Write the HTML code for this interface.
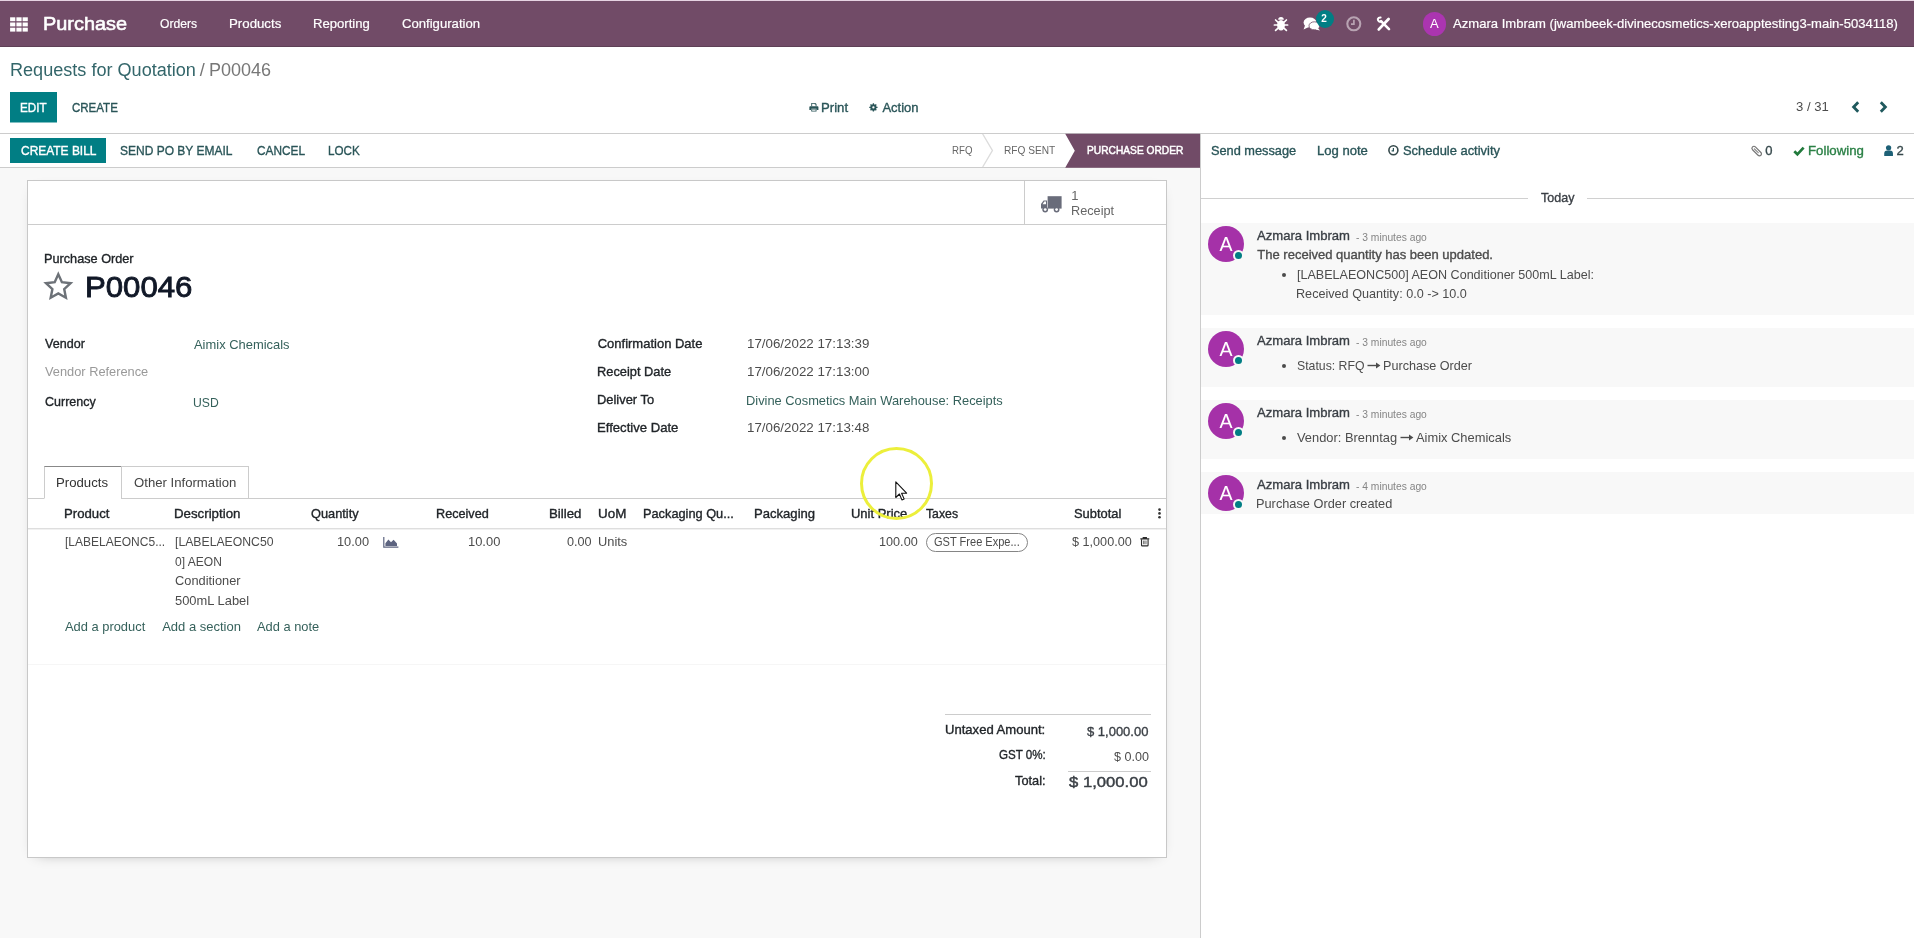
<!DOCTYPE html>
<html><head><meta charset="utf-8">
<title>P00046 - Odoo</title>
<style>
*{box-sizing:border-box;margin:0;padding:0}
html,body{width:1914px;height:938px;overflow:hidden}
body{font-family:"Liberation Sans",sans-serif;font-size:13px;color:#4c4c4c;background:#f8f8f8;position:relative}
.abs{position:absolute;white-space:nowrap}
.box{position:absolute}
svg{position:absolute;overflow:visible}
#nav{left:0;top:0;width:1914px;height:47px;background:#714B67;border-top:1px solid #e6d3e2;border-bottom:1px solid #5e4056}
#cp{left:0;top:47px;width:1914px;height:87px;background:#fff;border-bottom:1px solid #ccc}
#sb{left:0;top:134px;width:1200px;height:34px;background:#fff;border-bottom:1px solid #ccc}
#sheet{left:27px;top:180px;width:1140px;height:678px;background:#fff;border:1px solid #c8c8c8;box-shadow:0 4px 14px -10px rgba(0,0,0,.45)}
#chat{left:1200px;top:134px;width:714px;height:804px;background:#fff;border-left:1px solid #ccc}
.msg{left:1201px;width:713px;background:#f8f8f8}
.av{width:36px;height:36px;border-radius:50%;background:#a531a8}
.dot{width:11px;height:11px;border-radius:50%;background:#017e84;border:2px solid #f8f8f8}
.bul{width:4px;height:4px;border-radius:50%;background:#4c4c4c}
</style></head><body>
<div id="root" style="position:absolute;left:0;top:0;width:1914px;height:938px;will-change:transform">
<div class="box" id="nav"></div>
<div class="box" id="cp"></div>
<div class="box" id="sb"></div>
<div class="box" id="sheet"></div>
<div class="box" id="chat"></div>
<!-- nav icons -->
<svg style="left:9.5px;top:16.5px" width="18" height="15" viewBox="0 0 18 15"><g fill="#fff"><rect x="0.1" y="0.3" width="5.2" height="3.9"/><rect x="6.4" y="0.3" width="5.2" height="3.9"/><rect x="12.6" y="0.3" width="5.2" height="3.9"/><rect x="0.1" y="5.5" width="5.2" height="3.9"/><rect x="6.4" y="5.5" width="5.2" height="3.9"/><rect x="12.6" y="5.5" width="5.2" height="3.9"/><rect x="0.1" y="10.7" width="5.2" height="3.9"/><rect x="6.4" y="10.7" width="5.2" height="3.9"/><rect x="12.6" y="10.7" width="5.2" height="3.9"/></g></svg>
<!-- bug -->
<svg style="left:1273px;top:15px" width="16" height="17" viewBox="0 0 16 17"><g fill="#fff" stroke="#fff" stroke-linecap="round"><ellipse cx="8" cy="10.2" rx="3.9" ry="5.2" stroke="none"/><path d="M5.2 4.8a2.8 2.8 0 0 1 5.6 0z" stroke="none"/><path d="M1.4 10h13.2M2.6 5l2.8 2.6M13.4 5l-2.8 2.6M2.6 15.4l2.8-2.6M13.4 15.4l-2.8-2.6" stroke-width="1.7" fill="none"/></g></svg>
<!-- comments -->
<svg style="left:1303px;top:16px" width="18" height="16" viewBox="0 0 18 16"><g fill="#fff"><ellipse cx="7" cy="6.6" rx="6.4" ry="5"/><path d="M2.2 9l-1.6 4.4 4.6-2.1z"/><ellipse cx="11.4" cy="9.8" rx="5.4" ry="4" stroke="#714B67" stroke-width="0.8"/><path d="M14.6 11.8l2.4 2.7-4.6-.9z"/></g></svg>
<div class="box" style="left:1315.7px;top:10.2px;width:18px;height:18px;border-radius:50%;background:#017e84"></div>
<!-- clock (dim) -->
<svg style="left:1346px;top:15.5px" width="16" height="16" viewBox="0 0 16 16"><circle cx="7.8" cy="7.8" r="6.5" fill="none" stroke="#b8a3b2" stroke-width="2.1"/><path d="M7.9 3.8v4.4H5" fill="none" stroke="#b8a3b2" stroke-width="1.7"/></svg>
<!-- tools -->
<svg style="left:1376px;top:16px" width="16" height="16" viewBox="0 0 16 16"><g stroke="#fff" stroke-linecap="round" fill="none"><path d="M2.8 13.4L12.6 3" stroke-width="2.8"/><path d="M5 5.2L13 13.2" stroke-width="2.6"/><path d="M1.8 3a2.7 2.7 0 0 0 3.8 2.6M4.6 1.4a2.7 2.7 0 0 0-2.8 1.8" stroke-width="2"/></g></svg>
<!-- avatar -->
<div class="box" style="left:1422.7px;top:12.4px;width:23.6px;height:23.6px;border-radius:50%;background:#ab35b0"></div>

<!-- control panel -->
<div class="box" style="left:10px;top:92px;width:47px;height:30px;background:#017e84"></div><div class="box" style="left:10px;top:122px;width:47px;height:1px;background:#80bfc2"></div>
<!-- print -->
<svg style="left:808.8px;top:102.2px" width="9.6" height="10.5" viewBox="0 0 11 12"><g fill="#2a5558"><path d="M2.6 1h4.6l1.4 1.4v2.4h-1V2.9H6.6V2H3.6v2.8h-1z"/><path d="M1.4 4.8h8.4a1 1 0 0 1 1 1v3.4H8.6v-1.6H2.6v1.6H.4V5.8a1 1 0 0 1 1-1z"/><path d="M2.6 8.2h6v2.6h-6zM3.6 9v1h4V9z" fill-rule="evenodd"/></g></svg>
<!-- cog -->
<svg style="left:869.2px;top:102.8px" width="8.8" height="8.8" viewBox="0 0 10 10"><g fill="none" stroke="#2a5558"><circle cx="5" cy="5" r="2.5" stroke-width="2"/><path d="M5 .3v9.4M.3 5h9.4M1.7 1.7l6.6 6.6M8.3 1.7L1.7 8.3" stroke-width="1.5"/></g><circle cx="5" cy="5" r="1.3" fill="#fff"/></svg>
<!-- pager chevrons -->
<svg style="left:1851px;top:101px" width="10" height="12" viewBox="0 0 10 12"><path d="M7.2 1.2L2.6 6l4.6 4.8" fill="none" stroke="#1f595d" stroke-width="2.8"/></svg>
<svg style="left:1878px;top:101px" width="10" height="12" viewBox="0 0 10 12"><path d="M2.8 1.2L7.4 6l-4.6 4.8" fill="none" stroke="#1f595d" stroke-width="2.8"/></svg>

<!-- statusbar -->
<div class="box" style="left:10px;top:138px;width:96px;height:25px;background:#017e84"></div>
<svg style="left:975px;top:134px" width="226" height="33" viewBox="975 134 226 33"><path d="M982.7 134L992.4 150.5L982.7 167" fill="none" stroke="#dcdcdc" stroke-width="1.4"/><path d="M1065.2 133.8H1200V167.7H1065.2L1074.8 150.7z" fill="#714B67"/></svg>

<!-- chatter topbar icons -->
<svg style="left:1388px;top:145px" width="11" height="11" viewBox="0 0 11 11"><circle cx="5.4" cy="5.2" r="4.5" fill="none" stroke="#35494b" stroke-width="1.6"/><path d="M5.4 3v2.8H3.6" fill="none" stroke="#2a5558" stroke-width="1.2"/></svg>
<svg style="left:1751.3px;top:144.6px" width="11" height="12" viewBox="0 0 11 12"><g transform="translate(5.5 5.9) rotate(-45)" fill="none" stroke="#777" stroke-linecap="round"><path d="M-2,-3.6a2,2 0 0 1 4,0V4.2a2,2 0 0 1 -4,0z" stroke-width="1.2"/><path d="M0,-3V2.6" stroke-width="1"/></g></svg>
<svg style="left:1793px;top:145.6px" width="12" height="11" viewBox="0 0 12 11"><path d="M1.3 5.2L4.4 8.3L10.6 1.6" fill="none" stroke="#217a3c" stroke-width="2.7"/></svg>
<svg style="left:1884.3px;top:144.8px" width="9.4" height="11.2" viewBox="0 0 9 11"><g fill="#1d6076"><circle cx="4.4" cy="2.8" r="2.6"/><path d="M0.1 10.8V8.4a3 3 0 0 1 3-3h2.6a3 3 0 0 1 3 3v2.4z"/></g></svg>
<!-- Today separator -->
<div class="box" style="left:1201px;top:197.5px;width:327px;height:1px;background:#d0d0d0"></div>
<div class="box" style="left:1587px;top:197.5px;width:327px;height:1px;background:#d0d0d0"></div>
<!-- messages -->
<div class="box msg" style="top:222.6px;height:92.5px"></div>
<div class="box msg" style="top:327.8px;height:59.5px"></div>
<div class="box msg" style="top:399.6px;height:59.8px"></div>
<div class="box msg" style="top:471.7px;height:42px"></div>
<div class="box av" style="left:1208px;top:226.3px"></div><div class="box dot" style="left:1232.9px;top:250.1px"></div>
<div class="box av" style="left:1208px;top:331px"></div><div class="box dot" style="left:1232.9px;top:354.8px"></div>
<div class="box av" style="left:1208px;top:403px"></div><div class="box dot" style="left:1232.9px;top:426.8px"></div>
<div class="box av" style="left:1208px;top:475px"></div><div class="box dot" style="left:1232.9px;top:498.8px"></div>
<div class="box bul" style="left:1282.4px;top:272.6px"></div>
<div class="box bul" style="left:1282.4px;top:364px"></div>
<div class="box bul" style="left:1282.4px;top:436px"></div>
<!-- long arrows -->
<svg style="left:1367px;top:361px" width="14" height="9" viewBox="0 0 14 9"><path d="M0.5 4.5H10" stroke="#4c4c4c" stroke-width="1.4" fill="none"/><path d="M9 1.6L13.4 4.5L9 7.4z" fill="#4c4c4c"/></svg>
<svg style="left:1399.5px;top:433px" width="14" height="9" viewBox="0 0 14 9"><path d="M0.5 4.5H10" stroke="#4c4c4c" stroke-width="1.4" fill="none"/><path d="M9 1.6L13.4 4.5L9 7.4z" fill="#4c4c4c"/></svg>

<!-- sheet: button box -->
<div class="box" style="left:28px;top:224px;width:1138px;height:1px;background:#ccc"></div>
<div class="box" style="left:1024px;top:181px;width:1px;height:43px;background:#ccc"></div>
<!-- truck (flipped) -->
<svg style="left:1039.8px;top:196px" width="22" height="17" viewBox="0 0 22 17"><g fill="#696c7a"><rect x="7.6" y="0.2" width="14" height="12.4"/><path d="M7 4.4H3.6L1 8v4.6h6z"/><path d="M2.6 8.2L4.3 5.6H6v2.6z" fill="#fff"/><circle cx="5.2" cy="13.6" r="2.9"/><circle cx="16.6" cy="13.6" r="2.9"/><circle cx="5.2" cy="13.6" r="1.4" fill="#fff"/><circle cx="16.6" cy="13.6" r="1.4" fill="#fff"/></g></svg>
<!-- star -->
<svg style="left:44px;top:272px" width="29" height="28" viewBox="0 0 29 28"><path d="M14.3 2.2L17.9 10.2L26.6 11.2L20.2 17.1L21.9 25.7L14.3 21.4L6.7 25.7L8.4 17.1L2 11.2L10.7 10.2Z" fill="none" stroke="#6d7278" stroke-width="2.4" stroke-linejoin="miter"/></svg>
<!-- tabs -->
<div class="box" style="left:28px;top:498px;width:1138px;height:1px;background:#ccc"></div>
<div class="box" style="left:44px;top:466px;width:78px;height:33px;background:#fff;border:1px solid #ccc;border-bottom:1px solid #fff;border-top-color:#888"></div>
<div class="box" style="left:121px;top:466px;width:128px;height:33px;border:1px solid #ccc;border-left:none"></div>
<!-- table lines -->
<div class="box" style="left:28px;top:528px;width:1138px;height:1px;background:#dedede"></div><div class="box" style="left:28px;top:529px;width:1138px;height:1px;background:#f1f1f1"></div>
<div class="box" style="left:28px;top:664px;width:1138px;height:1px;background:#f6f6f6"></div>
<!-- chart icon -->
<svg style="left:383px;top:537px" width="16" height="11" viewBox="0 0 16 11"><path d="M.8 0v10.2h14.6" fill="none" stroke="#5d6480" stroke-width="1.2"/><path d="M2.4 9V6.2L5.4 2.6L8 5.2L10.6 2.8L14 6.4V9z" fill="#5d6480"/></svg>
<!-- tax pill -->
<div class="box" style="left:926px;top:533px;width:102px;height:18.5px;border:1px solid #858585;border-radius:9.5px"></div>
<!-- trash -->
<svg style="left:1139.8px;top:536px" width="9.6" height="11.4" viewBox="0 0 12 12"><g fill="none" stroke="#2b2b2b" stroke-width="1.4"><path d="M.4 2.5h11.2M4 2.3V.9h4v1.4"/><path d="M1.9 2.8v7.5a1 1 0 0 0 1 1h6.2a1 1 0 0 0 1-1V2.8" stroke-width="1.4"/><path d="M4.4 4.6v4.6M6 4.6v4.6M7.6 4.6v4.6" stroke-width=".75"/></g></svg>
<!-- kebab -->
<svg style="left:1157.1px;top:507.8px" width="5" height="11" viewBox="0 0 5 11"><g fill="#333"><circle cx="2.5" cy="1.6" r="1.3"/><circle cx="2.5" cy="5.4" r="1.3"/><circle cx="2.5" cy="9.2" r="1.3"/></g></svg>
<!-- totals lines -->
<div class="box" style="left:944.5px;top:714px;width:206.5px;height:1px;background:#ccc"></div>
<div class="box" style="left:1067.8px;top:770.5px;width:83.2px;height:1px;background:#ccc"></div>

<span class="abs" style="left:43.25px;top:14.0px;font-size:19px;line-height:20px;color:#fff;-webkit-text-stroke:0.57px;transform:scaleX(1.0470);transform-origin:0 50%;">Purchase</span>
<span class="abs" style="left:159.59px;top:13.5px;font-size:13px;line-height:20px;color:#fff;-webkit-text-stroke:0.2px;transform:scaleX(0.9349);transform-origin:0 50%;">Orders</span>
<span class="abs" style="left:229.08px;top:13.5px;font-size:13px;line-height:20px;color:#fff;-webkit-text-stroke:0.2px;transform:scaleX(1.0196);transform-origin:0 50%;">Products</span>
<span class="abs" style="left:313.49px;top:13.5px;font-size:13px;line-height:20px;color:#fff;-webkit-text-stroke:0.2px;transform:scaleX(1.0084);transform-origin:0 50%;">Reporting</span>
<span class="abs" style="left:402.40px;top:13.5px;font-size:13px;line-height:20px;color:#fff;-webkit-text-stroke:0.2px;transform:scaleX(1.0091);transform-origin:0 50%;">Configuration</span>
<span class="abs" style="left:1453.10px;top:13.5px;font-size:13px;line-height:20px;color:#fff;-webkit-text-stroke:0.2px;transform:scaleX(1.0051);transform-origin:0 50%;">Azmara Imbram (jwambeek-divinecosmetics-xeroapptesting3-main-5034118)</span>
<span class="abs" style="left:1430.00px;top:14.3px;font-size:13px;line-height:20px;color:#fff;">A</span>
<span class="abs" style="left:1321.25px;top:9.0px;font-size:10px;line-height:20px;color:#fff;font-weight:700;">2</span>
<span class="abs" style="left:9.70px;top:59.5px;font-size:18px;line-height:20px;color:#33666a;transform:scaleX(1.0044);transform-origin:0 50%;">Requests for Quotation</span>
<span class="abs" style="left:199.85px;top:59.5px;font-size:18px;line-height:20px;color:#777;">/</span>
<span class="abs" style="left:209.00px;top:59.5px;font-size:18px;line-height:20px;color:#777;">P00046</span>
<span class="abs" style="left:19.68px;top:97.5px;font-size:13px;line-height:20px;color:#fff;-webkit-text-stroke:0.39px;transform:scaleX(0.8981);transform-origin:0 50%;">EDIT</span>
<span class="abs" style="left:72.15px;top:97.5px;font-size:13px;line-height:20px;color:#2a5558;-webkit-text-stroke:0.35px;transform:scaleX(0.8847);transform-origin:0 50%;">CREATE</span>
<span class="abs" style="left:821.36px;top:97.5px;font-size:13px;line-height:20px;color:#2a5558;-webkit-text-stroke:0.35px;transform:scaleX(1.0125);transform-origin:0 50%;">Print</span>
<span class="abs" style="left:882.38px;top:97.5px;font-size:13px;line-height:20px;color:#2a5558;-webkit-text-stroke:0.35px;">Action</span>
<span class="abs" style="left:1795.90px;top:97.0px;font-size:13px;line-height:20px;color:#4c4c4c;transform:scaleX(1.0063);transform-origin:0 50%;">3 / 31</span>
<span class="abs" style="left:20.58px;top:140.5px;font-size:13px;line-height:20px;color:#fff;-webkit-text-stroke:0.39px;transform:scaleX(0.9188);transform-origin:0 50%;">CREATE BILL</span>
<span class="abs" style="left:120.16px;top:140.5px;font-size:13px;line-height:20px;color:#2a5558;-webkit-text-stroke:0.35px;transform:scaleX(0.9230);transform-origin:0 50%;">SEND PO BY EMAIL</span>
<span class="abs" style="left:257.06px;top:140.5px;font-size:13px;line-height:20px;color:#2a5558;-webkit-text-stroke:0.35px;transform:scaleX(0.9100);transform-origin:0 50%;">CANCEL</span>
<span class="abs" style="left:328.26px;top:140.5px;font-size:13px;line-height:20px;color:#2a5558;-webkit-text-stroke:0.35px;transform:scaleX(0.8979);transform-origin:0 50%;">LOCK</span>
<span class="abs" style="left:952.00px;top:139.8px;font-size:11px;line-height:20px;color:#666;transform:scaleX(0.8790);transform-origin:0 50%;">RFQ</span>
<span class="abs" style="left:1004.20px;top:139.8px;font-size:11px;line-height:20px;color:#666;transform:scaleX(0.9214);transform-origin:0 50%;">RFQ SENT</span>
<span class="abs" style="left:1087.43px;top:139.9px;font-size:11px;line-height:20px;color:#fff;-webkit-text-stroke:0.5px;transform:scaleX(0.9276);transform-origin:0 50%;">PURCHASE ORDER</span>
<span class="abs" style="left:1211.27px;top:140.7px;font-size:13px;line-height:20px;color:#2a5558;-webkit-text-stroke:0.35px;transform:scaleX(0.9822);transform-origin:0 50%;">Send message</span>
<span class="abs" style="left:1316.67px;top:140.7px;font-size:13px;line-height:20px;color:#2a5558;-webkit-text-stroke:0.35px;transform:scaleX(1.0056);transform-origin:0 50%;">Log note</span>
<span class="abs" style="left:1402.77px;top:140.7px;font-size:13px;line-height:20px;color:#2a5558;-webkit-text-stroke:0.35px;transform:scaleX(0.9939);transform-origin:0 50%;">Schedule activity</span>
<span class="abs" style="left:1765.35px;top:140.5px;font-size:13px;line-height:20px;color:#37494c;-webkit-text-stroke:0.35px;">0</span>
<span class="abs" style="left:1808.26px;top:140.7px;font-size:13px;line-height:20px;color:#2b8046;-webkit-text-stroke:0.35px;transform:scaleX(1.0179);transform-origin:0 50%;">Following</span>
<span class="abs" style="left:1896.50px;top:140.5px;font-size:13px;line-height:20px;color:#37494c;-webkit-text-stroke:0.35px;">2</span>
<span class="abs" style="left:1540.67px;top:187.6px;font-size:13px;line-height:20px;color:#3a3f45;-webkit-text-stroke:0.35px;transform:scaleX(0.9623);transform-origin:0 50%;">Today</span>
<span class="abs" style="left:1071.20px;top:185.8px;font-size:13px;line-height:20px;color:#666;">1</span>
<span class="abs" style="left:1070.72px;top:200.8px;font-size:13px;line-height:20px;color:#666;transform:scaleX(0.9778);transform-origin:0 50%;">Receipt</span>
<span class="abs" style="left:43.69px;top:248.6px;font-size:13px;line-height:20px;color:#212529;-webkit-text-stroke:0.35px;transform:scaleX(0.9762);transform-origin:0 50%;">Purchase Order</span>
<span class="abs" style="left:85.29px;top:277.0px;font-size:30px;line-height:20px;color:#111827;-webkit-text-stroke:0.9px;transform:scaleX(1.0389);transform-origin:0 50%;">P00046</span>
<span class="abs" style="left:44.67px;top:333.9px;font-size:13px;line-height:20px;color:#212529;-webkit-text-stroke:0.35px;transform:scaleX(0.9663);transform-origin:0 50%;">Vendor</span>
<span class="abs" style="left:194.30px;top:334.6px;font-size:13px;line-height:20px;color:#35615b;transform:scaleX(0.9941);transform-origin:0 50%;">Aimix Chemicals</span>
<span class="abs" style="left:44.50px;top:361.7px;font-size:13px;line-height:20px;color:#999;transform:scaleX(0.9850);transform-origin:0 50%;">Vendor Reference</span>
<span class="abs" style="left:44.67px;top:392.3px;font-size:13px;line-height:20px;color:#212529;-webkit-text-stroke:0.35px;transform:scaleX(0.9611);transform-origin:0 50%;">Currency</span>
<span class="abs" style="left:193.36px;top:393.3px;font-size:13px;line-height:20px;color:#35615b;transform:scaleX(0.9363);transform-origin:0 50%;">USD</span>
<span class="abs" style="left:597.68px;top:333.6px;font-size:13px;line-height:20px;color:#212529;-webkit-text-stroke:0.35px;">Confirmation Date</span>
<span class="abs" style="left:747.30px;top:333.6px;font-size:13px;line-height:20px;color:#4c4c4c;transform:scaleX(1.0256);transform-origin:0 50%;">17/06/2022 17:13:39</span>
<span class="abs" style="left:596.69px;top:361.7px;font-size:13px;line-height:20px;color:#212529;-webkit-text-stroke:0.35px;transform:scaleX(0.9856);transform-origin:0 50%;">Receipt Date</span>
<span class="abs" style="left:747.30px;top:361.7px;font-size:13px;line-height:20px;color:#4c4c4c;transform:scaleX(1.0256);transform-origin:0 50%;">17/06/2022 17:13:00</span>
<span class="abs" style="left:596.68px;top:389.8px;font-size:13px;line-height:20px;color:#212529;-webkit-text-stroke:0.35px;transform:scaleX(0.9927);transform-origin:0 50%;">Deliver To</span>
<span class="abs" style="left:746.31px;top:390.8px;font-size:13px;line-height:20px;color:#35615b;transform:scaleX(0.9888);transform-origin:0 50%;">Divine Cosmetics Main Warehouse: Receipts</span>
<span class="abs" style="left:596.67px;top:417.5px;font-size:13px;line-height:20px;color:#212529;-webkit-text-stroke:0.35px;transform:scaleX(1.0086);transform-origin:0 50%;">Effective Date</span>
<span class="abs" style="left:747.30px;top:417.5px;font-size:13px;line-height:20px;color:#4c4c4c;transform:scaleX(1.0256);transform-origin:0 50%;">17/06/2022 17:13:48</span>
<span class="abs" style="left:56.19px;top:472.5px;font-size:13px;line-height:20px;color:#333;transform:scaleX(1.0137);transform-origin:0 50%;">Products</span>
<span class="abs" style="left:134.40px;top:472.5px;font-size:13px;line-height:20px;color:#444;transform:scaleX(1.0116);transform-origin:0 50%;">Other Information</span>
<span class="abs" style="left:64.06px;top:503.6px;font-size:13px;line-height:20px;color:#212529;-webkit-text-stroke:0.35px;transform:scaleX(1.0126);transform-origin:0 50%;">Product</span>
<span class="abs" style="left:174.46px;top:503.6px;font-size:13px;line-height:20px;color:#212529;-webkit-text-stroke:0.35px;transform:scaleX(1.0211);transform-origin:0 50%;">Description</span>
<span class="abs" style="left:310.87px;top:503.6px;font-size:13px;line-height:20px;color:#212529;-webkit-text-stroke:0.35px;transform:scaleX(0.9845);transform-origin:0 50%;">Quantity</span>
<span class="abs" style="left:436.30px;top:503.6px;font-size:13px;line-height:20px;color:#212529;-webkit-text-stroke:0.35px;transform:scaleX(0.9734);transform-origin:0 50%;">Received</span>
<span class="abs" style="left:548.66px;top:503.6px;font-size:13px;line-height:20px;color:#212529;-webkit-text-stroke:0.35px;transform:scaleX(1.0189);transform-origin:0 50%;">Billed</span>
<span class="abs" style="left:598.45px;top:503.6px;font-size:13px;line-height:20px;color:#212529;-webkit-text-stroke:0.35px;transform:scaleX(1.0320);transform-origin:0 50%;">UoM</span>
<span class="abs" style="left:643.49px;top:503.6px;font-size:13px;line-height:20px;color:#212529;-webkit-text-stroke:0.35px;transform:scaleX(0.9821);transform-origin:0 50%;">Packaging Qu...</span>
<span class="abs" style="left:753.77px;top:503.6px;font-size:13px;line-height:20px;color:#212529;-webkit-text-stroke:0.35px;transform:scaleX(1.0062);transform-origin:0 50%;">Packaging</span>
<span class="abs" style="left:850.98px;top:503.6px;font-size:13px;line-height:20px;color:#212529;-webkit-text-stroke:0.35px;">Unit Price</span>
<span class="abs" style="left:926.06px;top:503.6px;font-size:13px;line-height:20px;color:#212529;-webkit-text-stroke:0.35px;transform:scaleX(0.9423);transform-origin:0 50%;">Taxes</span>
<span class="abs" style="left:1073.87px;top:503.6px;font-size:13px;line-height:20px;color:#212529;-webkit-text-stroke:0.35px;transform:scaleX(0.9924);transform-origin:0 50%;">Subtotal</span>
<span class="abs" style="left:64.90px;top:531.7px;font-size:13px;line-height:20px;color:#4c4c4c;transform:scaleX(0.9242);transform-origin:0 50%;">[LABELAEONC5...</span>
<span class="abs" style="left:175.30px;top:531.7px;font-size:13px;line-height:20px;color:#4c4c4c;transform:scaleX(0.9403);transform-origin:0 50%;">[LABELAEONC50</span>
<span class="abs" style="left:175.30px;top:552.1px;font-size:13px;line-height:20px;color:#4c4c4c;transform:scaleX(0.9272);transform-origin:0 50%;">0] AEON</span>
<span class="abs" style="left:175.30px;top:570.8px;font-size:13px;line-height:20px;color:#4c4c4c;transform:scaleX(0.9858);transform-origin:0 50%;">Conditioner</span>
<span class="abs" style="left:175.30px;top:590.5px;font-size:13px;line-height:20px;color:#4c4c4c;transform:scaleX(0.9923);transform-origin:0 50%;">500mL Label</span>
<span class="abs" style="left:337.10px;top:531.7px;font-size:13px;line-height:20px;color:#4c4c4c;transform:scaleX(0.9845);transform-origin:0 50%;">10.00</span>
<span class="abs" style="left:467.60px;top:531.7px;font-size:13px;line-height:20px;color:#4c4c4c;transform:scaleX(0.9938);transform-origin:0 50%;">10.00</span>
<span class="abs" style="left:566.90px;top:531.7px;font-size:13px;line-height:20px;color:#4c4c4c;transform:scaleX(0.9732);transform-origin:0 50%;">0.00</span>
<span class="abs" style="left:598.31px;top:531.7px;font-size:13px;line-height:20px;color:#4c4c4c;transform:scaleX(0.9891);transform-origin:0 50%;">Units</span>
<span class="abs" style="left:878.70px;top:531.7px;font-size:13px;line-height:20px;color:#4c4c4c;transform:scaleX(0.9739);transform-origin:0 50%;">100.00</span>
<span class="abs" style="left:933.60px;top:532.0px;font-size:12px;line-height:20px;color:#4c4c4c;transform:scaleX(0.9201);transform-origin:0 50%;">GST Free Expe...</span>
<span class="abs" style="left:1072.40px;top:531.7px;font-size:13px;line-height:20px;color:#4c4c4c;transform:scaleX(0.9720);transform-origin:0 50%;">$ 1,000.00</span>
<span class="abs" style="left:64.90px;top:617.0px;font-size:13px;line-height:20px;color:#35615b;transform:scaleX(0.9910);transform-origin:0 50%;">Add a product</span>
<span class="abs" style="left:162.20px;top:617.0px;font-size:13px;line-height:20px;color:#35615b;">Add a section</span>
<span class="abs" style="left:257.20px;top:617.0px;font-size:13px;line-height:20px;color:#35615b;transform:scaleX(0.9879);transform-origin:0 50%;">Add a note</span>
<span class="abs" style="left:944.97px;top:719.6px;font-size:13px;line-height:20px;color:#212529;-webkit-text-stroke:0.35px;transform:scaleX(1.0052);transform-origin:0 50%;">Untaxed Amount:</span>
<span class="abs" style="left:1086.98px;top:721.5px;font-size:13px;line-height:20px;color:#3a3f45;-webkit-text-stroke:0.35px;">$ 1,000.00</span>
<span class="abs" style="left:998.76px;top:745.4px;font-size:13px;line-height:20px;color:#212529;-webkit-text-stroke:0.35px;transform:scaleX(0.8919);transform-origin:0 50%;">GST 0%:</span>
<span class="abs" style="left:1113.80px;top:746.6px;font-size:13px;line-height:20px;color:#4c4c4c;transform:scaleX(0.9662);transform-origin:0 50%;">$ 0.00</span>
<span class="abs" style="left:1015.27px;top:771.1px;font-size:13px;line-height:20px;color:#212529;-webkit-text-stroke:0.35px;transform:scaleX(0.9834);transform-origin:0 50%;">Total:</span>
<span class="abs" style="left:1069.15px;top:772.3px;font-size:15.5px;line-height:20px;color:#3a3f45;-webkit-text-stroke:0.46px;transform:scaleX(1.0756);transform-origin:0 50%;">$ 1,000.00</span>
<span class="abs" style="left:1257.38px;top:225.6px;font-size:13px;line-height:20px;color:#3a3f45;-webkit-text-stroke:0.35px;transform:scaleX(1.0056);transform-origin:0 50%;">Azmara Imbram</span>
<span class="abs" style="left:1257.38px;top:330.8px;font-size:13px;line-height:20px;color:#3a3f45;-webkit-text-stroke:0.35px;transform:scaleX(1.0056);transform-origin:0 50%;">Azmara Imbram</span>
<span class="abs" style="left:1257.38px;top:403.0px;font-size:13px;line-height:20px;color:#3a3f45;-webkit-text-stroke:0.35px;transform:scaleX(1.0056);transform-origin:0 50%;">Azmara Imbram</span>
<span class="abs" style="left:1257.38px;top:474.8px;font-size:13px;line-height:20px;color:#3a3f45;-webkit-text-stroke:0.35px;transform:scaleX(1.0056);transform-origin:0 50%;">Azmara Imbram</span>
<span class="abs" style="left:1356.20px;top:226.6px;font-size:11px;line-height:20px;color:#858585;transform:scaleX(0.9339);transform-origin:0 50%;">- 3 minutes ago</span>
<span class="abs" style="left:1356.20px;top:331.8px;font-size:11px;line-height:20px;color:#858585;transform:scaleX(0.9339);transform-origin:0 50%;">- 3 minutes ago</span>
<span class="abs" style="left:1356.20px;top:404.0px;font-size:11px;line-height:20px;color:#858585;transform:scaleX(0.9339);transform-origin:0 50%;">- 3 minutes ago</span>
<span class="abs" style="left:1356.20px;top:475.8px;font-size:11px;line-height:20px;color:#858585;transform:scaleX(0.9339);transform-origin:0 50%;">- 4 minutes ago</span>
<span class="abs" style="left:1219.60px;top:234.3px;font-size:19.5px;line-height:20px;color:#fff;">A</span>
<span class="abs" style="left:1219.60px;top:339.0px;font-size:19.5px;line-height:20px;color:#fff;">A</span>
<span class="abs" style="left:1219.60px;top:411.0px;font-size:19.5px;line-height:20px;color:#fff;">A</span>
<span class="abs" style="left:1219.60px;top:483.0px;font-size:19.5px;line-height:20px;color:#fff;">A</span>
<span class="abs" style="left:1257.37px;top:244.5px;font-size:13px;line-height:20px;color:#4c4c4c;-webkit-text-stroke:0.35px;">The received quantity has been updated.</span>
<span class="abs" style="left:1297.10px;top:265.1px;font-size:13px;line-height:20px;color:#4c4c4c;transform:scaleX(0.9661);transform-origin:0 50%;">[LABELAEONC500] AEON Conditioner 500mL Label:</span>
<span class="abs" style="left:1296.13px;top:283.6px;font-size:13px;line-height:20px;color:#4c4c4c;transform:scaleX(0.9712);transform-origin:0 50%;">Received Quantity: 0.0 -&gt; 10.0</span>
<span class="abs" style="left:1297.10px;top:355.8px;font-size:13px;line-height:20px;color:#4c4c4c;transform:scaleX(0.9439);transform-origin:0 50%;">Status: RFQ</span>
<span class="abs" style="left:1382.53px;top:355.8px;font-size:13px;line-height:20px;color:#4c4c4c;transform:scaleX(0.9701);transform-origin:0 50%;">Purchase Order</span>
<span class="abs" style="left:1297.10px;top:427.6px;font-size:13px;line-height:20px;color:#4c4c4c;transform:scaleX(0.9895);transform-origin:0 50%;">Vendor: Brenntag</span>
<span class="abs" style="left:1416.00px;top:427.6px;font-size:13px;line-height:20px;color:#4c4c4c;transform:scaleX(0.9910);transform-origin:0 50%;">Aimix Chemicals</span>
<span class="abs" style="left:1256.22px;top:493.6px;font-size:13px;line-height:20px;color:#4c4c4c;transform:scaleX(0.9825);transform-origin:0 50%;">Purchase Order created</span>
<!-- cursor highlight -->
<div class="box" style="left:859.8px;top:446.5px;width:73.2px;height:73.2px;border-radius:50%;border:3.6px solid #ecef3b"></div>
<svg style="left:895px;top:481px" width="13" height="21" viewBox="0 0 13 21"><path d="M.8.9v15.6l3.6-3.5 2.5 5.9 2.2-1-2.5-5.7h5z" fill="#fff" stroke="#111" stroke-width="1.1" stroke-linejoin="round"/></svg>

</div>
</body></html>
